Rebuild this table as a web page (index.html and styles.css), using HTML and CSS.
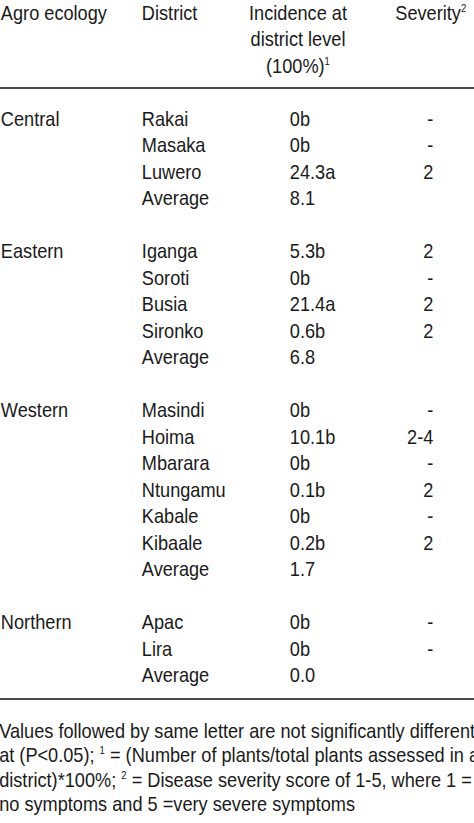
FILE: index.html
```html
<!DOCTYPE html>
<html>
<head>
<meta charset="utf-8">
<link rel="stylesheet" href="styles.css">
</head>
<body>
<div class="page">
  <div class="head">
    <div class="h1">Agro ecology</div>
    <div class="h2">District</div>
    <div class="h3">Incidence at<br>district level<br>(100%)<sup>1</sup></div>
    <div class="h4">Severity<sup>2</sup></div>
  </div>
  <div class="rule"></div>
  <div class="body">
    <div class="group">
      <div class="row"><div class="c1">Central</div><div class="c2">Rakai</div><div class="c3">0b</div><div class="c4">-</div></div>
      <div class="row"><div class="c1"></div><div class="c2">Masaka</div><div class="c3">0b</div><div class="c4">-</div></div>
      <div class="row"><div class="c1"></div><div class="c2">Luwero</div><div class="c3">24.3a</div><div class="c4">2</div></div>
      <div class="row"><div class="c1"></div><div class="c2">Average</div><div class="c3">8.1</div><div class="c4"></div></div>
    </div>
    <div class="group">
      <div class="row"><div class="c1">Eastern</div><div class="c2">Iganga</div><div class="c3">5.3b</div><div class="c4">2</div></div>
      <div class="row"><div class="c1"></div><div class="c2">Soroti</div><div class="c3">0b</div><div class="c4">-</div></div>
      <div class="row"><div class="c1"></div><div class="c2">Busia</div><div class="c3">21.4a</div><div class="c4">2</div></div>
      <div class="row"><div class="c1"></div><div class="c2">Sironko</div><div class="c3">0.6b</div><div class="c4">2</div></div>
      <div class="row"><div class="c1"></div><div class="c2">Average</div><div class="c3">6.8</div><div class="c4"></div></div>
    </div>
    <div class="group">
      <div class="row"><div class="c1">Western</div><div class="c2">Masindi</div><div class="c3">0b</div><div class="c4">-</div></div>
      <div class="row"><div class="c1"></div><div class="c2">Hoima</div><div class="c3">10.1b</div><div class="c4">2-4</div></div>
      <div class="row"><div class="c1"></div><div class="c2">Mbarara</div><div class="c3">0b</div><div class="c4">-</div></div>
      <div class="row"><div class="c1"></div><div class="c2">Ntungamu</div><div class="c3">0.1b</div><div class="c4">2</div></div>
      <div class="row"><div class="c1"></div><div class="c2">Kabale</div><div class="c3">0b</div><div class="c4">-</div></div>
      <div class="row"><div class="c1"></div><div class="c2">Kibaale</div><div class="c3">0.2b</div><div class="c4">2</div></div>
      <div class="row"><div class="c1"></div><div class="c2">Average</div><div class="c3">1.7</div><div class="c4"></div></div>
    </div>
    <div class="group last">
      <div class="row"><div class="c1">Northern</div><div class="c2">Apac</div><div class="c3">0b</div><div class="c4">-</div></div>
      <div class="row"><div class="c1"></div><div class="c2">Lira</div><div class="c3">0b</div><div class="c4">-</div></div>
      <div class="row"><div class="c1"></div><div class="c2">Average</div><div class="c3">0.0</div><div class="c4"></div></div>
    </div>
  </div>
  <div class="rule bottom"></div>
  <div class="note">Values followed by same letter are not significantly different<br>at (P&lt;0.05); <sup>1</sup> = (Number of plants/total plants assessed in a<br>district)*100%; <sup>2</sup> = Disease severity score of 1-5, where 1 =<br>no symptoms and 5 =very severe symptoms</div>
</div>
</body>
</html>
```

FILE: styles.css
```css
html, body {
  margin: 0;
  padding: 0;
  background: #ffffff;
  overflow: hidden;
}
.page {
  width: 548px;
  height: 823px;
  overflow: hidden;
  transform: scaleX(0.865);
  transform-origin: 0 0;
  font-family: "Liberation Sans", Arial, sans-serif;
  font-size: 21px;
  line-height: 26.5px;
  color: #1a1a1a;
}
sup {
  font-size: 11px;
  line-height: 0;
  vertical-align: 8px;
}
.head {
  display: flex;
  margin-top: -0.5px;
  padding-left: 1px;
}
.h1 { width: 163px; }
.h2 { width: 120px; }
.h3 {
  width: 121px;
  text-align: center;
}
.h4 {
  padding-left: 52px;
}
.rule {
  height: 2px;
  background: #4a4a4a;
  margin-top: 7.5px;
}
.body {
  padding-top: 17px;
  padding-left: 1px;
}
.group {
  margin-bottom: 26.5px;
}
.group.last {
  margin-bottom: 0;
}
.row {
  display: flex;
  height: 26.5px;
}
.c1 { width: 163px; }
.c2 { width: 171px; }
.c3 { width: 120px; }
.c4 {
  width: 46px;
  text-align: right;
}
.bottom {
  margin-top: 9.5px;
}
.note {
  padding-top: 18.5px;
  line-height: 24.5px;
  white-space: nowrap;
  margin-left: -1px;
}
```
